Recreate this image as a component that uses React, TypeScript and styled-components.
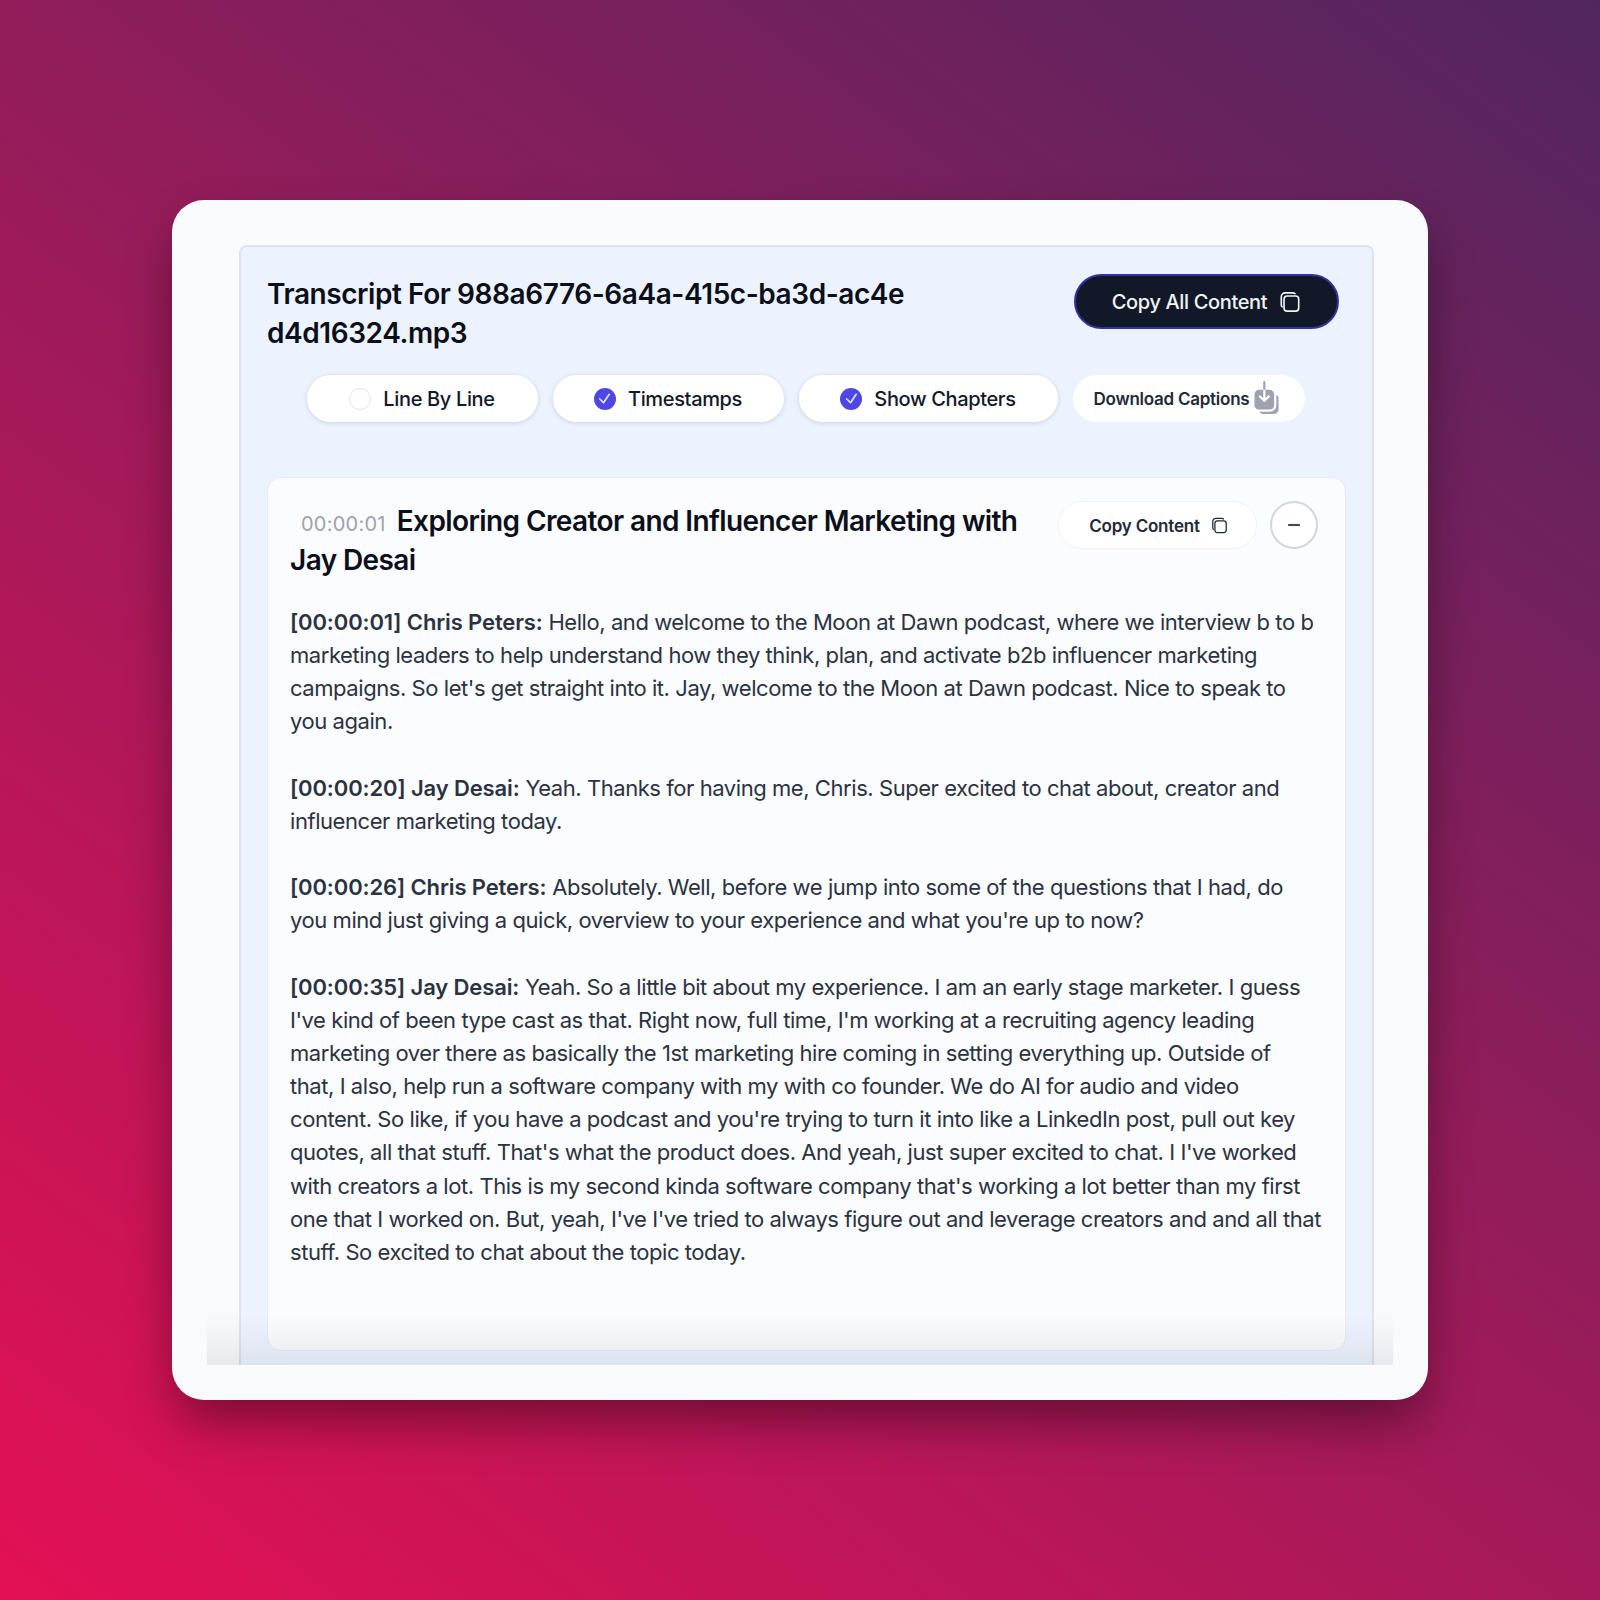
import * as React from 'react'
import styled, { createGlobalStyle } from 'styled-components'
import { HiArrowDownOnSquareStack, HiCheck, HiMinus } from 'react-icons/hi2'

const GlobalStyle = createGlobalStyle`
  html, body {
    margin: 0;
    padding: 0;
  }
  body {
    font-family: Inter, "Liberation Sans", sans-serif;
  }
  * {
    box-sizing: border-box;
  }
`

const Page = styled.div`
  width: 1600px;
  height: 1600px;
  padding: 200px 172px;
  background: linear-gradient(37deg, #e41055 0%, #51265f 100%);
`

const Shell = styled.div`
  position: relative;
  height: 1200px;
  padding: 45px 54px 35px 67px;
  background: #f9fafc;
  border-radius: 32px;
  box-shadow: 0 25px 50px -5px rgba(0, 0, 0, 0.42);
`

const Fade = styled.div`
  position: absolute;
  left: 35px;
  right: 35px;
  bottom: 35px;
  height: 50px;
  background: linear-gradient(to bottom, rgba(60, 60, 90, 0), rgba(60, 60, 90, 0.09));
  pointer-events: none;
`

const Panel = styled.div`
  height: 100%;
  padding: 28px 26px 0 26px;
  background: #edf3fe;
  border: 2px solid #dfe2e8;
  border-bottom: none;
  border-radius: 8px 8px 0 0;
  overflow: hidden;
`

const TopRow = styled.div`
  display: flex;
  justify-content: space-between;
  align-items: flex-start;
  padding-right: 7px;
`

const PageTitle = styled.h1`
  width: 650px;
  margin: 0;
  font-size: 28px;
  line-height: 39px;
  font-weight: 600;
  letter-spacing: -0.43px;
  color: #0b0f19;
  word-break: break-all;
`

const CopyAll = styled.button`
  display: flex;
  align-items: center;
  justify-content: center;
  gap: 12px;
  width: 265px;
  height: 55px;
  margin-top: -1px;
  font: 500 20px Inter, sans-serif;
  letter-spacing: -0.35px;
  color: #f3f4f6;
  background: #111827;
  border: 2px solid #3730a3;
  border-radius: 28px;
`

const Toggles = styled.div`
  display: flex;
  justify-content: center;
  gap: 15px;
  margin-top: 22px;
  padding-right: 2px;
`

const Pill = styled.div<{ $width: number }>`
  display: flex;
  align-items: center;
  justify-content: center;
  gap: 12px;
  width: ${p => p.$width}px;
  height: 47px;
  font-size: 20px;
  font-weight: 500;
  letter-spacing: -0.35px;
  color: #111827;
  background: #fff;
  border-radius: 24px;
  box-shadow: 0 1px 5px rgba(60, 70, 100, 0.2);
`

const Radio = styled.span<{ $on: boolean }>`
  display: flex;
  align-items: center;
  justify-content: center;
  width: 22px;
  height: 22px;
  color: #e0e7ff;
  background: ${p => (p.$on ? '#4f46e5' : '#fff')};
  border: ${p => (p.$on ? 'none' : '1px solid #e2e4e8')};
  border-radius: 50%;
`

const DownloadPill = styled(Pill)`
  gap: 0;
  padding-right: 3px;
  font-size: 17px;
  letter-spacing: -0.25px;
  font-weight: 600;
  box-shadow: none;
  color: #1f2937;
  svg {
    margin-top: -2px;
    margin-right: -4px;
    color: #9ca3af;
  }
`

const Section = styled.section`
  height: 874px;
  margin-top: 55px;
  padding: 24px 27px 0 22px;
  background: #fbfcff;
  border: 1px solid #e6eaf2;
  border-radius: 14px;
`

const SectionHead = styled.div`
  display: flex;
  align-items: flex-start;
  justify-content: space-between;
`

const SectionTitle = styled.h2`
  width: 750px;
  margin: 0;
  font-size: 28px;
  line-height: 39px;
  font-weight: 600;
  letter-spacing: -0.6px;
  color: #0b0f19;
`

const Stamp = styled.span`
  margin: 0 11px;
  font-size: 20px;
  line-height: 1;
  font-weight: 400;
  letter-spacing: 0.25px;
  color: #9ca3af;
`

const HeadButtons = styled.div`
  display: flex;
  gap: 13px;
  margin-top: -1px;
`

const CopyButton = styled.button`
  display: flex;
  align-items: center;
  justify-content: center;
  gap: 11px;
  width: 199px;
  height: 48px;
  padding: 1px 0 0 2px;
  font: 600 17px Inter, sans-serif;
  letter-spacing: -0.2px;
  color: #1f2937;
  background: #fff;
  border: 1px solid #f0f2f6;
  border-radius: 24px;
`

const Collapse = styled.button`
  display: flex;
  align-items: center;
  justify-content: center;
  width: 48px;
  height: 48px;
  padding: 0;
  color: #1f2937;
  background: #fff;
  border: 2px solid #d4d6da;
  border-radius: 50%;
`

const Body = styled.div`
  width: 1031px;
  margin-top: 26px;
`

const Para = styled.p`
  margin: 0 0 33.15px;
  font-size: 22px;
  line-height: 33.15px;
  letter-spacing: -0.44px;
  color: #2b3240;
  white-space: pre-line;
  b {
    font-weight: 600;
    letter-spacing: -0.12px;
    color: #2b3240;
  }
`

const CopyIcon = ({ size }: { size: number }) => (
  <svg width={size} height={size} viewBox="0 0 24 24" fill="none" stroke="currentColor" strokeWidth="1.8">
    <rect x="5.5" y="5.5" width="16" height="16.5" rx="3.5" />
    <path d="M18 3.4C17.4 2.5 16.4 2 15.2 2H7C4.3 2 2.5 3.8 2.5 6.5V15c0 1.2.5 2.2 1.4 2.9" />
  </svg>
)

const lines = [
  {
    head: '[00:00:01] Chris Peters:',
    text: " Hello, and welcome to the Moon at Dawn podcast, where we interview b to b marketing leaders to help understand how they think, plan, and activate b2b influencer marketing campaigns. So let's get straight into it. Jay, welcome to the Moon at Dawn podcast. Nice to speak to you again.",
  },
  {
    head: '[00:00:20] Jay Desai:',
    text: ' Yeah. Thanks for having me, Chris. Super excited to chat about, creator and influencer marketing today.',
  },
  {
    head: '[00:00:26] Chris Peters:',
    text: " Absolutely. Well, before we jump into some of the questions that I had, do you mind just giving a quick, overview to your experience and what you're up to now?",
  },
  {
    head: '[00:00:35] Jay Desai:',
    text: " Yeah. So a little bit about my experience. I am an early stage marketer. I guess I've kind of been type cast as that. Right now, full time, I'm working at a recruiting agency leading marketing over there as basically the 1st marketing hire coming in setting everything up. Outside of\nthat, I also, help run a software company with my with co founder. We do AI for audio and video content. So like, if you have a podcast and you're trying to turn it into like a LinkedIn post, pull out key quotes, all that stuff. That's what the product does. And yeah, just super excited to chat. I I've worked with creators a lot. This is my second kinda software company that's working a lot better than my first one that I worked on. But, yeah, I've I've tried to always figure out and leverage creators and and all that stuff. So excited to chat about the topic today.",
  },
]

const App = () => {
  return (
    <Page>
      <GlobalStyle />
      <Shell>
        <Panel>
          <TopRow>
            <PageTitle>Transcript For 988a6776-6a4a-415c-ba3d-ac4ed4d16324.mp3</PageTitle>
            <CopyAll>
              Copy All Content
              <CopyIcon size={22} />
            </CopyAll>
          </TopRow>
          <Toggles>
            <Pill $width={231}>
              <Radio $on={false} />
              Line By Line
            </Pill>
            <Pill $width={231}>
              <Radio $on>
                <HiCheck size={15} strokeWidth={1.5} />
              </Radio>
              Timestamps
            </Pill>
            <Pill $width={259}>
              <Radio $on>
                <HiCheck size={15} strokeWidth={1.5} />
              </Radio>
              Show Chapters
            </Pill>
            <DownloadPill $width={232}>
              Download Captions
              <HiArrowDownOnSquareStack size={35} />
            </DownloadPill>
          </Toggles>
          <Section>
            <SectionHead>
              <SectionTitle>
                <Stamp>00:00:01</Stamp>
                Exploring Creator and Influencer Marketing with Jay Desai
              </SectionTitle>
              <HeadButtons>
                <CopyButton>
                  Copy Content
                  <CopyIcon size={17} />
                </CopyButton>
                <Collapse>
                  <HiMinus size={18} strokeWidth={1} />
                </Collapse>
              </HeadButtons>
            </SectionHead>
            <Body>
              {lines.map(line => (
                <Para key={line.head}>
                  <b>{line.head}</b>
                  {line.text}
                </Para>
              ))}
            </Body>
          </Section>
        </Panel>
        <Fade />
      </Shell>
    </Page>
  )
}

export default App
